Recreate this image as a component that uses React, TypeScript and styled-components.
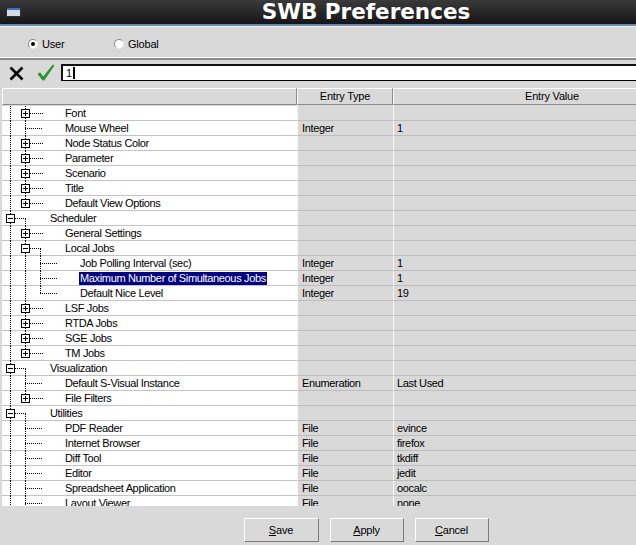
import React from "react";
import styled, { createGlobalStyle } from "styled-components";

const GlobalStyle = createGlobalStyle`
  html, body { margin: 0; padding: 0; background: #d9d9d9; overflow: hidden; }
  body { font-family: "Liberation Sans", Arial, sans-serif; }
`;

type Kind = "plus" | "minus" | "leaf";

interface Row {
  label: string;
  level: number;
  kind: Kind;
  rails: number[];
  last?: boolean;
  selected?: boolean;
  type?: string;
  value?: string;
}

const rows: Row[] = [
  { label: "Font", level: 2, kind: "plus", rails: [1] },
  { label: "Mouse Wheel", level: 2, kind: "leaf", rails: [1], type: "Integer", value: "1" },
  { label: "Node Status Color", level: 2, kind: "plus", rails: [1] },
  { label: "Parameter", level: 2, kind: "plus", rails: [1] },
  { label: "Scenario", level: 2, kind: "plus", rails: [1] },
  { label: "Title", level: 2, kind: "plus", rails: [1] },
  { label: "Default View Options", level: 2, kind: "plus", rails: [1], last: true },
  { label: "Scheduler", level: 1, kind: "minus", rails: [] },
  { label: "General Settings", level: 2, kind: "plus", rails: [1] },
  { label: "Local Jobs", level: 2, kind: "minus", rails: [1] },
  { label: "Job Polling Interval (sec)", level: 3, kind: "leaf", rails: [1, 2], type: "Integer", value: "1" },
  { label: "Maximum Number of Simultaneous Jobs", level: 3, kind: "leaf", rails: [1, 2], selected: true, type: "Integer", value: "1" },
  { label: "Default Nice Level", level: 3, kind: "leaf", rails: [1, 2], last: true, type: "Integer", value: "19" },
  { label: "LSF Jobs", level: 2, kind: "plus", rails: [1] },
  { label: "RTDA Jobs", level: 2, kind: "plus", rails: [1] },
  { label: "SGE Jobs", level: 2, kind: "plus", rails: [1] },
  { label: "TM Jobs", level: 2, kind: "plus", rails: [1], last: true },
  { label: "Visualization", level: 1, kind: "minus", rails: [] },
  { label: "Default S-Visual Instance", level: 2, kind: "leaf", rails: [1], type: "Enumeration", value: "Last Used" },
  { label: "File Filters", level: 2, kind: "plus", rails: [1], last: true },
  { label: "Utilities", level: 1, kind: "minus", rails: [] },
  { label: "PDF Reader", level: 2, kind: "leaf", rails: [1], type: "File", value: "evince" },
  { label: "Internet Browser", level: 2, kind: "leaf", rails: [1], type: "File", value: "firefox" },
  { label: "Diff Tool", level: 2, kind: "leaf", rails: [1], type: "File", value: "tkdiff" },
  { label: "Editor", level: 2, kind: "leaf", rails: [1], type: "File", value: "jedit" },
  { label: "Spreadsheet Application", level: 2, kind: "leaf", rails: [1], type: "File", value: "oocalc" },
  { label: "Layout Viewer", level: 2, kind: "leaf", rails: [1], type: "File", value: "none" },
];

// x of the connector line for a level, in tree-cell coordinates
const railX = (level: number) => 8 + 15 * (level - 1);

const Window = styled.div`
  width: 732px;
  height: 545px;
  display: flex;
  flex-direction: column;
  background: #d9d9d9;
  color: #000;
  font-family: "Liberation Sans", Arial, sans-serif;
  font-size: 11px;
  letter-spacing: -0.2px;
`;

const TitleBar = styled.div`
  height: 24px;
  display: grid;
  grid-template-columns: 1fr auto 1fr;
  background: linear-gradient(#3a3a3a, #151515);
  border-bottom: 2px solid #6a88ae;
`;

const TitleText = styled.div`
  font-family: "DejaVu Sans", sans-serif;
  font-weight: bold;
  font-size: 21.5px;
  line-height: 24px;
  letter-spacing: 0;
  color: #fff;
`;

const WinIcon = styled.svg`
  margin: 7px 0 0 6px;
`;

const RadioRow = styled.div`
  height: 32px;
  box-sizing: border-box;
  border-top: 1px solid #f2f2f2;
  border-bottom: 1px solid #ffffff;
  padding: 4px 0 0 28px;
  display: flex;
  align-items: center;
`;

const RadioLabel = styled.label<{ $width: number }>`
  width: ${(p) => p.$width}px;
  display: flex;
  align-items: center;
  gap: 4px;
`;

const RadioDot = styled.span<{ $on?: boolean }>`
  width: 10px;
  height: 10px;
  box-sizing: border-box;
  border-radius: 50%;
  background: #fff;
  border: 1px solid #8a8a8a;
  border-bottom-color: #e6e6e6;
  border-right-color: #e6e6e6;
  display: flex;
  align-items: center;
  justify-content: center;
  &::after {
    content: "";
    width: 4px;
    height: 4px;
    border-radius: 50%;
    background: ${(p) => (p.$on ? "#000" : "transparent")};
  }
`;

const Toolbar = styled.div`
  height: 30px;
  box-sizing: border-box;
  border-top: 2px solid #8c8c8c;
  padding-top: 4px;
  display: flex;
  align-items: flex-start;
`;

const ToolIcon = styled.svg<{ $left: number; $top: number }>`
  margin: ${(p) => p.$top}px 0 0 ${(p) => p.$left}px;
  flex: none;
`;

const Entry = styled.div`
  margin-left: 6px;
  flex: 1;
  height: 17px;
  box-sizing: border-box;
  background: #fff;
  border-top: 2px solid #111;
  border-left: 2px solid #111;
  border-bottom: 1px solid #000;
  padding-left: 3px;
  display: flex;
  align-items: center;
  font-size: 11px;
`;

const Caret = styled.span`
  display: inline-block;
  width: 2px;
  height: 12px;
  background: #000;
  margin-left: 1px;
`;

const Grid = styled.div`
  margin-left: 2px;
  display: grid;
  grid-template-columns: 295px 96px 318px;
`;

const HeadCell = styled.div`
  height: 17px;
  box-sizing: border-box;
  border-top: 1px solid #fff;
  border-left: 1px solid #fff;
  border-right: 1px solid #8a8a8a;
  border-bottom: 1px solid #8a8a8a;
  text-align: center;
  line-height: 15px;
`;

const Body = styled.div`
  margin-top: 1px;
  height: 400px;
  overflow: hidden;
  letter-spacing: -0.35px;
`;

const TreeCell = styled.div`
  height: 15px;
  box-sizing: border-box;
  background: #fff;
  border-bottom: 1px solid #c4c4c4;
  display: flex;
  align-items: center;
  white-space: nowrap;
`;

const DataCell = styled.div<{ $pad: number }>`
  height: 15px;
  box-sizing: border-box;
  background: #d9d9d9;
  border-left: 1px solid #f7f7f7;
  border-bottom: 1px solid #bdbdbd;
  padding-left: ${(p) => p.$pad}px;
  line-height: 15px;
  white-space: nowrap;
`;

const Label = styled.span<{ $selected?: boolean }>`
  padding: 0 1px;
  line-height: 13px;
  background: ${(p) => (p.$selected ? "#000080" : "transparent")};
  color: ${(p) => (p.$selected ? "#fff" : "#000")};
`;

const Guides = styled.svg`
  flex: none;
  overflow: visible;
  align-self: flex-start;
`;

const ButtonBar = styled.div`
  display: flex;
  justify-content: center;
  gap: 11px;
  padding-top: 12px;
`;

const Button = styled.button<{ $w: number }>`
  width: ${(p) => p.$w}px;
  height: 24px;
  box-sizing: border-box;
  background: #d9d9d9;
  border-style: solid;
  border-width: 1px;
  border-color: #ffffff #7b7b7b #7b7b7b #ffffff;
  font-family: "Liberation Sans", Arial, sans-serif;
  font-size: 11px;
  letter-spacing: -0.2px;
  color: #000;
  padding: 0;
`;

function Connectors({ row }: { row: Row }) {
  const cx = railX(row.level);
  const w = 47 + 15 * (row.level - 1);
  const dot = { stroke: "#000", strokeWidth: 1, strokeDasharray: "1 1", shapeRendering: "crispEdges" as const };
  const hasBox = row.kind !== "leaf";
  const hEnd = row.kind === "minus" ? cx + 16 : cx + 18;
  return (
    <Guides width={w} height={14} viewBox={`0 0 ${w} 14`}>
      {row.rails.map((r) => (
        <line key={r} x1={railX(r) + 0.5} y1={0} x2={railX(r) + 0.5} y2={15} {...dot} />
      ))}
      <line x1={cx + 0.5} y1={0} x2={cx + 0.5} y2={row.last ? 7 : 15} {...dot} />
      <line x1={hasBox ? cx + 5 : cx} y1={7.5} x2={hEnd} y2={7.5} {...dot} />
      {row.kind === "minus" && (
        <line x1={cx + 15.5} y1={8} x2={cx + 15.5} y2={15} {...dot} />
      )}
      {hasBox && (
        <g shapeRendering="crispEdges">
          <rect x={cx - 3.5} y={3.5} width={8} height={8} fill="#fff" stroke="#000" />
          <line x1={cx - 2} y1={7.5} x2={cx + 3} y2={7.5} stroke="#000" />
          {row.kind === "plus" && <line x1={cx + 0.5} y1={5} x2={cx + 0.5} y2={10} stroke="#000" />}
        </g>
      )}
    </Guides>
  );
}

export default function App() {
  return (
    <Window>
      <GlobalStyle />
      <TitleBar>
        <div>
          <WinIcon width={15} height={10} viewBox="0 0 15 10">
            <rect x={0.5} y={0.5} width={14} height={9} fill="#d3dae3" stroke="#2b2f36" />
            <rect x={1} y={1} width={13} height={2} fill="#3f6fc0" />
          </WinIcon>
        </div>
        <TitleText>SWB Preferences</TitleText>
        <div />
      </TitleBar>

      <RadioRow>
        <RadioLabel $width={86}>
          <RadioDot $on />
          User
        </RadioLabel>
        <RadioLabel $width={80}>
          <RadioDot />
          Global
        </RadioLabel>
      </RadioRow>

      <Toolbar>
        <ToolIcon $left={9} $top={2} width={15} height={15} viewBox="0 0 15 15">
          <path d="M1.5 1.5 L13.5 13.5 M13.5 1.5 L1.5 13.5" stroke="#000" strokeWidth={2.6} />
        </ToolIcon>
        <ToolIcon $left={13} $top={0} width={18} height={17} viewBox="0 0 18 17">
          <polygon points="0.5,10 3,8.3 6.3,12.4 15.8,0.6 17.4,1.6 7.3,16.6 5.6,16.6" fill="#2a962a" />
        </ToolIcon>
        <Entry>
          1<Caret />
        </Entry>
      </Toolbar>

      <Grid>
        <HeadCell />
        <HeadCell>Entry Type</HeadCell>
        <HeadCell>Entry Value</HeadCell>
      </Grid>

      <Body>
        {rows.map((row) => (
          <Grid key={row.label}>
            <TreeCell>
              <Connectors row={row} />
              <Label $selected={row.selected}>{row.label}</Label>
            </TreeCell>
            <DataCell $pad={4}>{row.type}</DataCell>
            <DataCell $pad={3}>{row.value}</DataCell>
          </Grid>
        ))}
      </Body>

      <ButtonBar>
        <Button $w={75}>
          <u>S</u>ave
        </Button>
        <Button $w={74}>
          <u>A</u>pply
        </Button>
        <Button $w={74}>
          <u>C</u>ancel
        </Button>
      </ButtonBar>
    </Window>
  );
}
